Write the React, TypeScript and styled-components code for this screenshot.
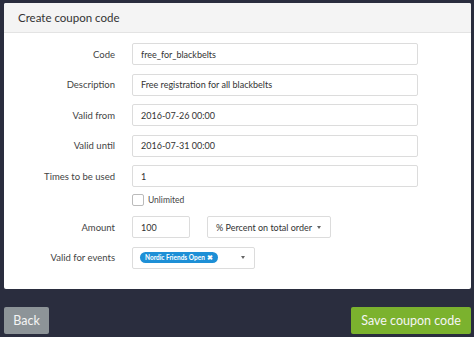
import React from "react";
import styled, { createGlobalStyle } from "styled-components";

const Global = createGlobalStyle`
  html, body { margin: 0; padding: 0; background: #2a2d3e; }
  body { font-family: "Lato", "Noto Sans", sans-serif; }
  * { box-sizing: border-box; }
`;

const Page = styled.div`
  width: 474px;
  height: 337px;
  padding: 3px 3px 3px 4px;
  display: flex;
  flex-direction: column;
`;

const Card = styled.div`
  background: #fff;
  border-radius: 2px;
  height: 286px;
  display: flex;
  flex-direction: column;
  overflow: hidden;
`;

const Header = styled.div`
  height: 30px;
  background: #f4f4f4;
  border-bottom: 1px solid #e3e3e3;
  display: flex;
  align-items: center;
  padding-left: 14px;
  font-size: 11.5px;
  color: #333;
`;

const Form = styled.div`
  padding-top: 10px;
  display: grid;
  grid-template-columns: 111px 286px;
  column-gap: 17px;
  row-gap: 8.5px;
  align-items: center;
`;

const Label = styled.div`
  text-align: right;
  font-size: 9.5px;
  color: #444;
`;

const Input = styled.div<{ $w?: number }>`
  height: 22px;
  width: ${(p) => (p.$w ? `${p.$w}px` : "100%")};
  border: 1px solid #dcdcdc;
  border-radius: 2px;
  display: flex;
  align-items: center;
  padding: 0 8px;
  font-size: 9px;
  color: #333;
  background: #fff;
  white-space: nowrap;
`;

const Select = styled(Input)`
  justify-content: space-between;
  padding-right: 9px;
`;

const Caret = styled.span`
  width: 0;
  height: 0;
  border-left: 2.5px solid transparent;
  border-right: 2.5px solid transparent;
  border-top: 3px solid #666;
`;

const Inline = styled.div`
  display: flex;
  gap: 17px;
  align-items: center;
`;

const CheckRow = styled.div`
  display: flex;
  align-items: center;
  gap: 4px;
  font-size: 8.5px;
  color: #444;
  margin: -2px 0 2px;
  height: 12px;
`;

const Box = styled.span`
  width: 12px;
  height: 12px;
  border: 1px solid #bbb;
  border-radius: 2px;
`;

const Tag = styled.span`
  background: #1d8fd6;
  color: #fff;
  font-size: 6.5px;
  font-weight: 700;
  border-radius: 6px;
  height: 11px;
  padding: 0 5px;
  margin-left: -1px;
  display: inline-flex;
  align-items: center;
  gap: 2px;
`;

const Footer = styled.div`
  margin-top: 18px;
  display: flex;
  justify-content: space-between;
`;

const Button = styled.div<{ $color: string; $w: number }>`
  height: 27px;
  width: ${(p) => p.$w}px;
  background: ${(p) => p.$color};
  color: #f5f5f5;
  border-radius: 2px;
  display: flex;
  align-items: center;
  justify-content: center;
  font-size: 12.5px;
`;

export default function App() {
  return (
    <>
      <Global />
      <Page>
        <Card>
          <Header>Create coupon code</Header>
          <Form>
            <Label>Code</Label>
            <Input>free_for_blackbelts</Input>
            <Label>Description</Label>
            <Input>Free registration for all blackbelts</Input>
            <Label>Valid from</Label>
            <Input>2016-07-26 00:00</Input>
            <Label>Valid until</Label>
            <Input>2016-07-31 00:00</Input>
            <Label>Times to be used</Label>
            <Input>1</Input>
            <div />
            <CheckRow>
              <Box />
              Unlimited
            </CheckRow>
            <Label>Amount</Label>
            <Inline>
              <Input $w={58}>100</Input>
              <Select $w={124}>
                % Percent on total order
                <Caret />
              </Select>
            </Inline>
            <Label>Valid for events</Label>
            <Select $w={123}>
              <Tag>
                Nordic Friends Open <span>✖</span>
              </Tag>
              <Caret />
            </Select>
          </Form>
        </Card>
        <Footer>
          <Button $color="#8d9498" $w={45}>Back</Button>
          <Button $color="#7bb22e" $w={120}>Save coupon code</Button>
        </Footer>
      </Page>
    </>
  );
}
